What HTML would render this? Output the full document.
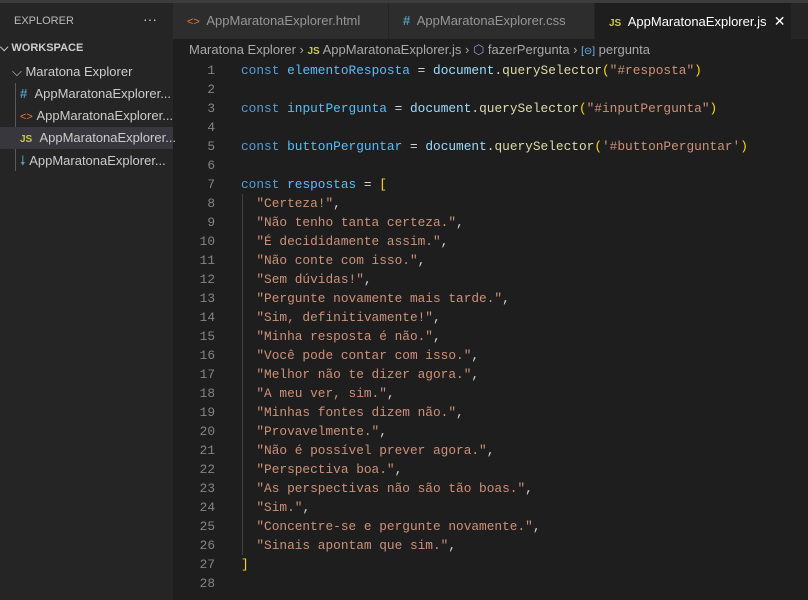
<!DOCTYPE html>
<html><head><meta charset="utf-8"><style>
*{margin:0;padding:0;box-sizing:border-box}
html,body{width:808px;height:600px;overflow:hidden}
body{background:#1e1e1e;font-family:"Liberation Sans",sans-serif;position:relative;color:#ccc}
.top{position:absolute;left:0;top:0;width:808px;height:3px;background:#3c3c3c}
.side{position:absolute;left:0;top:3px;width:173px;height:597px;background:#252526}
.t{position:absolute;white-space:nowrap;font-size:13px}
.tabs{position:absolute;left:173px;top:3px;width:635px;height:36px;background:#252526}
.tab{position:absolute;top:0;height:36px;background:#2d2d2d;border-right:1px solid #252526;font-size:13px;color:#969696;line-height:36px;padding-left:14px;white-space:nowrap}
.code{position:absolute;left:0;top:61px;font-family:"Liberation Mono",monospace;font-size:12.8px;line-height:19px;white-space:pre}
.ln{position:absolute;left:173px;width:42px;text-align:right;color:#858585}
.cl{position:absolute;left:241px;color:#d4d4d4}
.k{color:#569cd6}.v{color:#4fc1ff}.d{color:#9cdcfe}.f{color:#dcdcaa}.s{color:#ce9178}.b{color:#ffd700}
</style></head><body>
<div class="top"></div>
<div class="side">
<div class="t" style="left:14px;top:12px;font-size:11px;color:#bbb">EXPLORER</div>
<div class="t" style="left:143px;top:8px;font-size:14px;color:#ccc">···</div>
<div class="t" style="left:0;top:39px;font-size:11px;font-weight:bold;color:#ccc">⌵ WORKSPACE</div>
<div class="t" style="left:12px;top:61px;color:#ccc">⌵ Maratona Explorer</div>
<div style="position:absolute;left:15px;top:80px;width:1px;height:88px;background:#585858"></div>
<div style="position:absolute;left:0;top:124px;width:173px;height:22px;background:#37373d"></div>
<div class="t" style="left:20px;top:83px"><span style="color:#519aba;font-weight:bold">#</span>&nbsp;&nbsp;AppMaratonaExplorer...</div>
<div class="t" style="left:20px;top:105px"><span style="color:#e37933;font-size:11px">&lt;&gt;</span>&nbsp;AppMaratonaExplorer...</div>
<div class="t" style="left:20px;top:127px"><span style="color:#cbcb41;font-size:10px;font-weight:bold">JS</span>&nbsp;&nbsp;AppMaratonaExplorer...</div>
<div class="t" style="left:20px;top:149px"><span style="color:#519aba">🠗</span>&nbsp;AppMaratonaExplorer...</div>
</div>
<div class="tabs">
<div class="tab" style="left:0;width:216px"><span style="color:#e37933;font-size:11px">&lt;&gt;</span>&nbsp; AppMaratonaExplorer.html</div>
<div class="tab" style="left:216px;width:206px"><span style="color:#519aba;font-weight:bold">#</span>&nbsp; AppMaratonaExplorer.css</div>
<div class="tab" style="left:422px;width:197px;background:#1e1e1e;color:#fff"><span style="color:#cbcb41;font-size:10px;font-weight:bold">JS</span>&nbsp; AppMaratonaExplorer.js &nbsp;<span style="font-size:14px">✕</span></div>
</div>
<div class="t" style="left:189px;top:42px;color:#a9a9a9">Maratona Explorer ›  <span style="color:#cbcb41;font-size:10px;font-weight:bold">JS</span> AppMaratonaExplorer.js › <span style="color:#b180d7">⬡</span> fazerPergunta › <span style="color:#75beff;font-size:10px">[⊝]</span> pergunta</div>
<div style="position:absolute;left:242px;top:194px;width:1px;height:361px;background:#404040"></div>
<div class="code">
<div class="ln" style="top:0">1
2
3
4
5
6
7
8
9
10
11
12
13
14
15
16
17
18
19
20
21
22
23
24
25
26
27
28</div>
<div class="cl" style="top:0"><span class="k">const</span> <span class="v">elementoResposta</span> = <span class="d">document</span>.<span class="f">querySelector</span><span class="b">(</span><span class="s">"#resposta"</span><span class="b">)</span>

<span class="k">const</span> <span class="v">inputPergunta</span> = <span class="d">document</span>.<span class="f">querySelector</span><span class="b">(</span><span class="s">"#inputPergunta"</span><span class="b">)</span>

<span class="k">const</span> <span class="v">buttonPerguntar</span> = <span class="d">document</span>.<span class="f">querySelector</span><span class="b">(</span><span class="s">'#buttonPerguntar'</span><span class="b">)</span>

<span class="k">const</span> <span class="v">respostas</span> = <span class="b">[</span>
  <span class="s">"Certeza!"</span>,
  <span class="s">"Não tenho tanta certeza."</span>,
  <span class="s">"É decididamente assim."</span>,
  <span class="s">"Não conte com isso."</span>,
  <span class="s">"Sem dúvidas!"</span>,
  <span class="s">"Pergunte novamente mais tarde."</span>,
  <span class="s">"Sim, definitivamente!"</span>,
  <span class="s">"Minha resposta é não."</span>,
  <span class="s">"Você pode contar com isso."</span>,
  <span class="s">"Melhor não te dizer agora."</span>,
  <span class="s">"A meu ver, sim."</span>,
  <span class="s">"Minhas fontes dizem não."</span>,
  <span class="s">"Provavelmente."</span>,
  <span class="s">"Não é possível prever agora."</span>,
  <span class="s">"Perspectiva boa."</span>,
  <span class="s">"As perspectivas não são tão boas."</span>,
  <span class="s">"Sim."</span>,
  <span class="s">"Concentre-se e pergunte novamente."</span>,
  <span class="s">"Sinais apontam que sim."</span>,
<span class="b">]</span></div>
</div>
</body></html>
